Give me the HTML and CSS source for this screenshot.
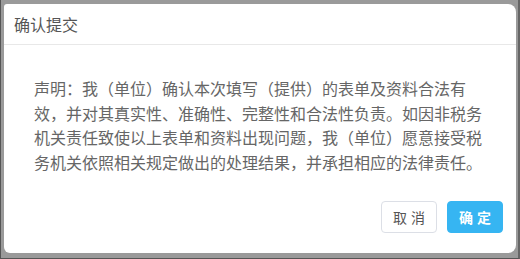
FILE: index.html
```html
<!DOCTYPE html>
<html lang="zh-CN">
  <head>
    <meta charset="UTF-8" />
    <meta name="viewport" content="width=device-width, initial-scale=1.0" />
    <title>确认提交</title>
    <link rel="stylesheet" href="styles.css">
  </head>
  <body>
    <div class="screen">
      <div class="dialog">
        <div class="dialog-header">确认提交</div>
        <div class="dialog-body">
          声明：我（单位）确认本次填写（提供）的表单及资料合法有效，并对其真实性、准确性、完整性和合法性负责。如因非税务机关责任致使以上表单和资料出现问题，我（单位）愿意接受税务机关依照相关规定做出的处理结果，并承担相应的法律责任。
        </div>
        <div class="dialog-footer">
          <button class="btn btn-cancel">取消</button>
          <button class="btn btn-primary">确定</button>
        </div>
      </div>
    </div>
  </body>
</html>
```

FILE: styles.css
```css
* {
  box-sizing: border-box;
}

body {
  margin: 0;
  font-family: "Noto Sans CJK SC", "Liberation Sans", sans-serif;
}

.screen {
  width: 520px;
  height: 259px;
  background: #9a9a9a;
  border-left: 1px solid #555;
  border-right: 2px solid #666;
  border-bottom: 1px solid #555;
  padding: 4px 2px 4px 3px;
}

.dialog {
  height: 249px;
  background: #fff;
  border-radius: 3px 8px 8px 6px;
  display: flex;
  flex-direction: column;
}

.dialog-header {
  height: 41px;
  line-height: 40px;
  padding: 0 10px;
  font-size: 16px;
  color: #555;
  border-bottom: 1px solid #e8e8e8;
}

.dialog-body {
  padding: 31px 30px 0;
  font-size: 16px;
  line-height: 24.6px;
  color: #666;
}

.dialog-footer {
  margin-top: auto;
  display: flex;
  justify-content: flex-end;
  gap: 10px;
  padding: 0 13px 20px 0;
}

.btn {
  width: 56px;
  height: 32px;
  border-radius: 4px;
  font-family: "Noto Sans CJK SC", sans-serif;
  font-size: 14px;
  letter-spacing: 4px;
  padding: 0 0 0 4px;
  cursor: pointer;
}

.btn-cancel {
  background: #fff;
  border: 1px solid #dcdfe6;
  color: #555;
}

.btn-primary {
  background: #36b5f2;
  border: 1px solid #36b5f2;
  color: #fff;
  font-weight: bold;
}
```
